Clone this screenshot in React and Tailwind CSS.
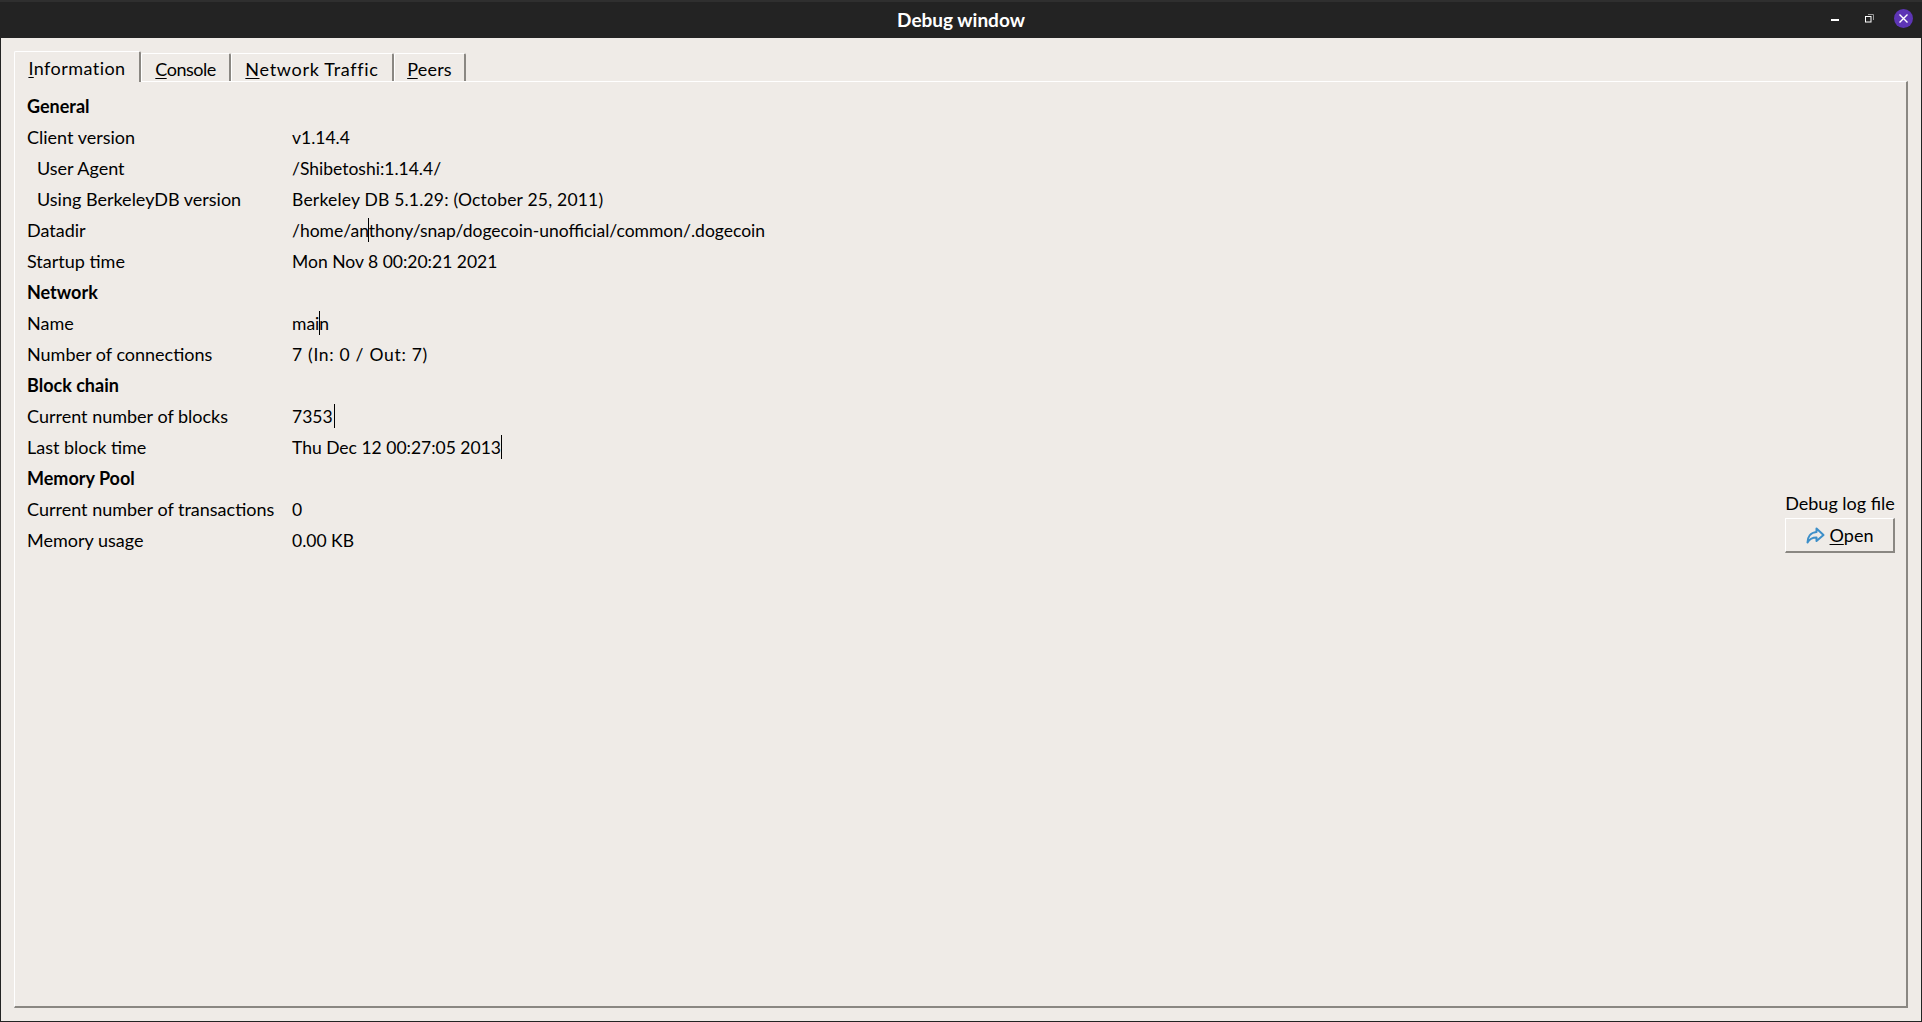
import { useState } from "react";

const rows = [
  { label: "General", head: true },
  { label: "Client version", value: "v1.14.4" },
  { label: "User Agent", value: "/Shibetoshi:1.14.4/", indent: true },
  { label: "Using BerkeleyDB version", value: "Berkeley DB 5.1.29: (October 25, 2011)", indent: true, track: "tracking-[0.2px]" },
  { label: "Datadir", value: "/home/anthony/snap/dogecoin-unofficial/common/.dogecoin", caret: "left-[76px]" },
  { label: "Startup time", value: "Mon Nov 8 00:20:21 2021" },
  { label: "Network", head: true },
  { label: "Name", value: "main", caret: "left-[27px]" },
  { label: "Number of connections", value: "7 (In: 0 / Out: 7)", track: "tracking-[0.7px]" },
  { label: "Block chain", head: true },
  { label: "Current number of blocks", value: "7353", caret: "left-[42px]" },
  { label: "Last block time", value: "Thu Dec 12 00:27:05 2013", caret: "left-[209px]" },
  { label: "Memory Pool", head: true },
  { label: "Current number of transactions", value: "0" },
  { label: "Memory usage", value: "0.00 KB" },
];

const tabs = [
  { key: "I", rest: "nformation", cls: "w-[127px] tracking-[0.45px]" },
  { key: "C", rest: "onsole", cls: "w-[90px] tracking-[-0.5px]" },
  { key: "N", rest: "etwork Traffic", cls: "w-[163px] tracking-[0.7px]" },
  { key: "P", rest: "eers", cls: "w-[72px] tracking-[0.2px]" },
];

function Tab({ tab, active, onClick }) {
  return (
    <button
      onClick={onClick}
      className={
        (active
          ? "h-[31px] pt-[2px] mb-[-1px] z-10 bg-[#efebe7] "
          : "h-[28px] pt-[2px] ") +
        "border-t border-l border-white border-r-2 border-r-[#8a8782] rounded-t-[2px] text-[18px] " +
        tab.cls
      }
    >
      <span className="underline underline-offset-2">{tab.key}</span>
      {tab.rest}
    </button>
  );
}

function Row({ row }) {
  return (
    <div className="flex h-[31px] items-center text-[18px]">
      <div className={row.head ? "w-[265px] font-bold" : row.indent ? "w-[265px] pl-[10px]" : "w-[265px]"}>
        {row.label}
      </div>
      {row.value && (
        <div className={"relative pt-[2px] text-[17.5px] " + (row.track || "")}>
          {row.value}
          {row.caret && <span className={`absolute top-[2px] w-px h-[24px] bg-black ${row.caret}`} />}
        </div>
      )}
    </div>
  );
}

export default function App() {
  const [active, setActive] = useState(0);

  return (
    <div className="w-[1922px] h-[1022px] flex flex-col overflow-hidden bg-[#efebe7] text-black font-['Lato','Noto_Sans',sans-serif]">
      {/* title bar */}
      <div className="h-[38px] shrink-0 relative flex items-center justify-center bg-[#232323] border-t-2 border-[#2f2f2f]">
        <span className="text-white font-bold text-[19px]">Debug window</span>
        <div className="absolute right-[9px] top-[7px] flex items-center">
          <span className="w-2 h-[2px] mt-[3px] bg-white" />
          <svg className="ml-[26px] mr-[20px]" width="9" height="9" viewBox="0 0 9 9" fill="none" stroke="white">
            <rect x="0.5" y="2.500" width="5.500" height="5.500" />
            <path d="M3 .5h5.500V6" stroke="#999" />
          </svg>
          <span className="w-[19px] h-[19px] rounded-full bg-[#5d35b5] flex items-center justify-center">
            <svg width="9" height="9" viewBox="0 0 9 9" stroke="white" strokeWidth="1.4">
              <path d="M.5.5l8 8M8.5.5l-8 8" />
            </svg>
          </span>
        </div>
      </div>

      <div className="flex-1 flex flex-col border-x border-b border-[#232323] pl-[13px] pr-[13px] pt-[13px] pb-[13px]">
        {/* tab strip */}
        <div className="h-[30px] shrink-0 flex items-end">
          {tabs.map((tab, i) => (
            <Tab key={tab.key} tab={tab} active={active === i} onClick={() => setActive(i)} />
          ))}
        </div>

        {/* info page */}
        <div className="flex-1 flex justify-between border-t border-l border-white border-r-2 border-b-2 border-r-[#8a8782] border-b-[#8a8782] pl-[12px] pr-[11px] pt-[9px]">
          <div>
            {rows.map((row) => (
              <Row key={row.label} row={row} />
            ))}
          </div>
          <div className="flex flex-col items-center self-start mt-[400px] text-[18px]">
            <span className="leading-[24px]">Debug log file</span>
            <button className="mt-[3px] w-[110px] h-[35px] flex items-center justify-center gap-[5px] border-t border-l border-white border-r-2 border-b-2 border-r-[#8a8782] border-b-[#8a8782]">
              <svg width="19" height="17" viewBox="0 0 19 17" fill="none" stroke="#3d8fc9" strokeWidth="2" strokeLinejoin="round">
                <path d="M10.500 1.500l7 6.500-7 6v-3.500C7 10.500 3.500 12 1.500 15.500 1.500 10 4.500 5.500 10.500 5z" />
              </svg>
              <span>
                <span className="underline underline-offset-2">O</span>pen
              </span>
            </button>
          </div>
        </div>
      </div>
    </div>
  );
}
